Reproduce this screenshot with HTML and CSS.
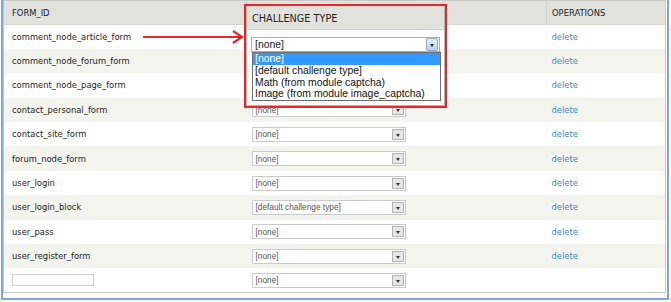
FILE: index.html
```html
<!DOCTYPE html>
<html lang="en">
  <head>
    <meta charset="UTF-8" />
    <meta name="viewport" content="width=device-width, initial-scale=1.0" />
    <title>CAPTCHA points</title>
    <link rel="stylesheet" href="styles.css">
  </head>
  <body>
    <div class="frame">
      <table class="captcha-table">
        <colgroup>
          <col class="col-form" />
          <col class="col-type" />
          <col class="col-ops" />
        </colgroup>
        <thead>
          <tr>
            <th>FORM_ID</th>
            <th>CHALLENGE TYPE</th>
            <th class="ops-head">OPERATIONS</th>
          </tr>
        </thead>
        <tbody>
          <tr>
            <td>comment_node_article_form</td>
            <td><div class="select"><span class="select-value">[none]</span><span class="select-btn"></span></div></td>
            <td><a href="#" class="op-link">delete</a></td>
          </tr>
          <tr>
            <td>comment_node_forum_form</td>
            <td><div class="select"><span class="select-value">[none]</span><span class="select-btn"></span></div></td>
            <td><a href="#" class="op-link">delete</a></td>
          </tr>
          <tr>
            <td>comment_node_page_form</td>
            <td><div class="select"><span class="select-value">[none]</span><span class="select-btn"></span></div></td>
            <td><a href="#" class="op-link">delete</a></td>
          </tr>
          <tr>
            <td>contact_personal_form</td>
            <td><div class="select"><span class="select-value">[none]</span><span class="select-btn"></span></div></td>
            <td><a href="#" class="op-link">delete</a></td>
          </tr>
          <tr>
            <td>contact_site_form</td>
            <td><div class="select"><span class="select-value">[none]</span><span class="select-btn"></span></div></td>
            <td><a href="#" class="op-link">delete</a></td>
          </tr>
          <tr>
            <td>forum_node_form</td>
            <td><div class="select"><span class="select-value">[none]</span><span class="select-btn"></span></div></td>
            <td><a href="#" class="op-link">delete</a></td>
          </tr>
          <tr>
            <td>user_login</td>
            <td><div class="select"><span class="select-value">[none]</span><span class="select-btn"></span></div></td>
            <td><a href="#" class="op-link">delete</a></td>
          </tr>
          <tr>
            <td>user_login_block</td>
            <td><div class="select"><span class="select-value">[default challenge type]</span><span class="select-btn"></span></div></td>
            <td><a href="#" class="op-link">delete</a></td>
          </tr>
          <tr>
            <td>user_pass</td>
            <td><div class="select"><span class="select-value">[none]</span><span class="select-btn"></span></div></td>
            <td><a href="#" class="op-link">delete</a></td>
          </tr>
          <tr>
            <td>user_register_form</td>
            <td><div class="select"><span class="select-value">[none]</span><span class="select-btn"></span></div></td>
            <td><a href="#" class="op-link">delete</a></td>
          </tr>
          <tr>
            <td><input type="text" class="text-input" /></td>
            <td><div class="select"><span class="select-value">[none]</span><span class="select-btn"></span></div></td>
            <td></td>
          </tr>
        </tbody>
      </table>

      <!-- callout: zoomed copy of the challenge type column with the list open -->
      <div class="callout">
        <div class="callout-inner">
          <div class="callout-head">CHALLENGE TYPE</div>
          <div class="callout-body">
            <div class="big-select">
              <span class="big-select-value">[none]</span>
              <span class="big-select-btn"></span>
            </div>
            <ul class="listbox">
              <li class="selected">[none]</li>
              <li>[default challenge type]</li>
              <li>Math (from module captcha)</li>
              <li>Image (from module image_captcha)</li>
            </ul>
          </div>
        </div>
      </div>

      <svg class="arrow" width="104" height="18" viewBox="0 0 104 18">
        <line x1="0" y1="9" x2="99" y2="9" stroke="#e8262a" stroke-width="2" />
        <polyline points="90,3 99,9 90,15" fill="none" stroke="#e8262a" stroke-width="2.2" />
      </svg>
    </div>
  </body>
</html>
```

FILE: styles.css
```css
* {
  margin: 0;
  padding: 0;
  box-sizing: border-box;
}

body {
  background: #fff;
  font-family: "DejaVu Sans", Verdana, sans-serif;
  color: #222;
}

.frame {
  position: relative;
  margin-left: 1px;
  width: 668px;
  height: 300px;
  border: 2px solid #7ba6de;
  border-top: none;
  padding: 0 1px 4px 0;
}

.captcha-table {
  width: 662px;
  border-collapse: collapse;
  table-layout: fixed;
  border: 1px solid #c9cac4;
  font-size: 8.4px;
}

.col-form {
  width: 243px;
}

.col-type {
  width: 300px;
}

.col-ops {
  width: 119px;
}

.captcha-table th {
  height: 24px;
  background: #e1e2dc;
  font-weight: normal;
  text-align: left;
  padding: 1px 8px 0;
  color: #222;
  border-bottom: 1px solid #d6d7d1;
}

.captcha-table th + th {
  border-left: 1px solid #cfd0ca;
}

.captcha-table th.ops-head {
  padding-left: 5px;
}

.captcha-table tbody tr {
  height: 24.4px;
}

.captcha-table tbody tr:nth-child(even) {
  background: #f3f4ee;
}

.captcha-table td {
  padding: 0 8px;
  vertical-align: middle;
  color: #222;
}

.captcha-table td:nth-child(2) {
  padding-left: 5px;
}

.captcha-table td:nth-child(3) {
  padding-left: 5px;
}

.op-link {
  color: #3a88cb;
  text-decoration: none;
}

.select {
  display: flex;
  align-items: center;
  justify-content: space-between;
  width: 154px;
  height: 15px;
  background: #fff;
  border: 1px solid #cacaca;
  padding: 0 1px 0 3px;
}

.select-value {
  font-family: "Liberation Sans", Arial, sans-serif;
  font-size: 8.3px;
  color: #555;
}

.select-btn {
  position: relative;
  width: 12px;
  height: 11px;
  background: #e6e6e6;
  border: 1px solid #b4b4b4;
}

.select-btn::after {
  content: "";
  position: absolute;
  left: 3px;
  top: 4px;
  border-left: 2px solid transparent;
  border-right: 2px solid transparent;
  border-top: 3px solid #333;
}

.text-input {
  display: block;
  width: 82px;
  height: 12px;
  border: 1px solid #cfcfcf;
  background: #fff;
}

.callout {
  position: absolute;
  left: 241px;
  top: 4px;
  width: 203px;
  height: 104px;
  border: 2px solid #e8262a;
  background: #fff;
}

.callout-inner {
  height: 100%;
  border: 1px solid #b5b6b0;
  border-top: none;
}

.callout-head {
  height: 24px;
  background: #e1e2dc;
  border-bottom: 1px solid #d0d1cb;
  font-size: 9.7px;
  line-height: 25px;
  padding-left: 5px;
  color: #222;
}

.callout-body {
  padding: 7px 0 0 4px;
}

.big-select {
  display: flex;
  align-items: center;
  justify-content: space-between;
  width: 189px;
  height: 15px;
  background: #fff;
  border: 1px solid #a9b0ba;
  padding: 0 1px 0 3px;
}

.big-select-value {
  font-family: "Liberation Sans", Arial, sans-serif;
  font-size: 10.4px;
  color: #222;
}

.big-select-btn {
  position: relative;
  width: 12px;
  height: 13px;
  border: 1px solid #8fa9cf;
  border-radius: 2px;
  background: linear-gradient(#e6eff9, #bdd3ee);
}

.big-select-btn::after {
  content: "";
  position: absolute;
  left: 3px;
  top: 5px;
  border-left: 2.5px solid transparent;
  border-right: 2.5px solid transparent;
  border-top: 3px solid #222;
}

.listbox {
  list-style: none;
  width: 189px;
  height: 49px;
  margin-left: 1px;
  border: 1px solid #6e6e6e;
  background: #fff;
  font-family: "Liberation Sans", Arial, sans-serif;
  font-size: 10.4px;
  color: #111;
}

.listbox li {
  height: 11.75px;
  line-height: 11.75px;
  padding-left: 2px;
}

.listbox li.selected {
  background: #3399ff;
  color: #fff;
}

.arrow {
  position: absolute;
  left: 140px;
  top: 28px;
}
```
